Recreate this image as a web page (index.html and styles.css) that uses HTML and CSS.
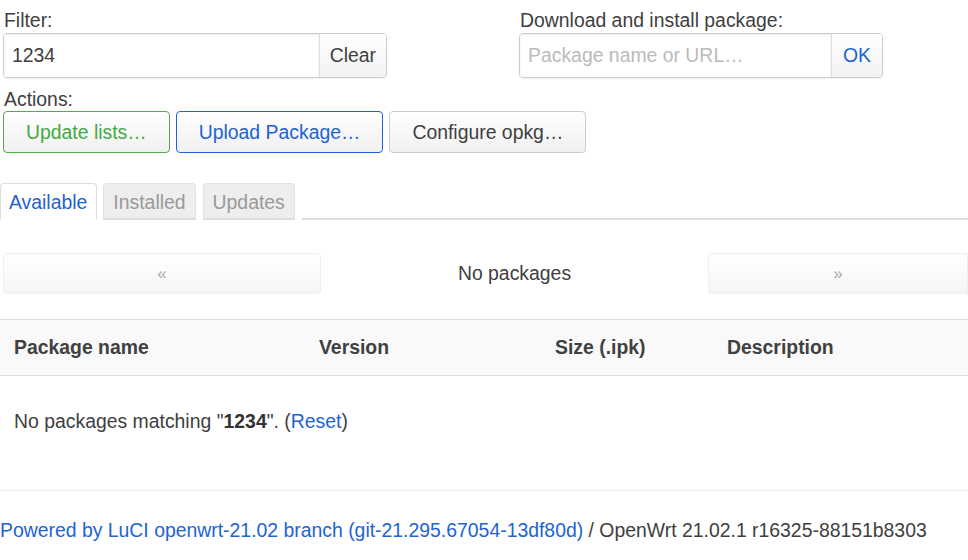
FILE: index.html
```html
<!DOCTYPE html>
<html lang="en">
<head>
    <meta charset="UTF-8">
    <title>Software - LuCI</title>
    <link rel="stylesheet" href="styles.css">
</head>
<body>
    <div class="controls">
        <div class="control-group">
            <label class="control-label">Filter:</label>
            <div class="input-group filter-group">
                <input class="text-input" type="text" value="1234">
                <button class="addon-button">Clear</button>
            </div>
        </div>
        <div class="control-group">
            <label class="control-label">Download and install package:</label>
            <div class="input-group install-group">
                <input class="text-input" type="text" placeholder="Package name or URL…">
                <button class="addon-button addon-blue">OK</button>
            </div>
        </div>
        <div class="control-group actions">
            <label class="control-label">Actions:</label>
            <div class="button-row">
                <button class="btn btn-positive">Update lists…</button>
                <button class="btn btn-action">Upload Package…</button>
                <button class="btn btn-neutral">Configure opkg…</button>
            </div>
        </div>
    </div>

    <ul class="tabs">
        <li class="tab active">Available</li>
        <li class="tab">Installed</li>
        <li class="tab">Updates</li>
        <li class="tab-fill"></li>
    </ul>

    <div class="pager">
        <button class="page-btn">&laquo;</button>
        <div class="page-info">No packages</div>
        <button class="page-btn page-next">&raquo;</button>
    </div>

    <table class="package-table">
        <thead>
            <tr>
                <th class="col-name">Package name</th>
                <th class="col-version">Version</th>
                <th class="col-size">Size (.ipk)</th>
                <th>Description</th>
            </tr>
        </thead>
        <tbody>
            <tr>
                <td colspan="4" class="empty-row">No packages matching "<strong>1234</strong>". (<a href="#">Reset</a>)</td>
            </tr>
        </tbody>
    </table>

    <footer class="footer">
        <a href="#">Powered by LuCI openwrt-21.02 branch (git-21.295.67054-13df80d)</a> / OpenWrt 21.02.1 r16325-88151b8303
    </footer>
</body>
</html>
```

FILE: styles.css
```css
body {
    margin: 0;
    font-family: "Liberation Sans", Arial, sans-serif;
    font-size: 19.4px;
    color: #404040;
    background: #fff;
    overflow: hidden;
}

a {
    color: #1d63d4;
    text-decoration: none;
}

.controls {
    display: grid;
    grid-template-columns: 516px 1fr;
    padding: 8px 3px 0 3px;
}

.control-label {
    display: block;
    padding-left: 1px;
    line-height: 24px;
    margin-bottom: 1px;
}

.actions {
    grid-column: 1 / 3;
    margin-top: 9px;
}

.actions .control-label {
    margin-bottom: 0;
}

.input-group {
    display: flex;
    height: 43px;
    border: 1px solid #ccc;
    border-radius: 4px;
    box-shadow: 0 1px 2px rgba(0, 0, 0, 0.06);
    overflow: hidden;
}

.filter-group {
    width: 382px;
}

.install-group {
    width: 362px;
}

.text-input {
    flex: 1;
    min-width: 0;
    border: none;
    outline: none;
    padding: 0 8px;
    font: inherit;
    color: #404040;
    box-shadow: inset 0 1px 2px rgba(0, 0, 0, 0.08);
}

.text-input::placeholder {
    color: #bbb;
}

.addon-button {
    border: none;
    border-left: 1px solid #ddd;
    background: linear-gradient(#fff, #f2f2f2);
    font: inherit;
    color: #404040;
    padding: 0 10px;
}

.addon-blue {
    color: #1d63d4;
    padding: 0 11px;
}

.button-row {
    display: flex;
    gap: 6px;
}

.btn {
    height: 42px;
    border-radius: 4px;
    background: linear-gradient(#fff, #f0f0f0);
    font: inherit;
    padding: 0 22px;
    border: 1px solid #ccc;
}

.btn-positive {
    border-color: #4cae4c;
    color: #45a845;
}

.btn-action {
    border-color: #1d63d4;
    color: #1d63d4;
}

.btn-neutral {
    color: #404040;
}

.tabs {
    display: flex;
    list-style: none;
    margin: 30px 0 0 0;
    padding: 0;
    height: 37px;
}

.tab {
    margin-right: 7px;
    padding: 0 9px;
    line-height: 36px;
    background: #eee;
    color: #999;
    border: 1px solid #e2e2e2;
    border-bottom: 2px solid #ddd;
    border-radius: 4px 4px 0 0;
}

.tab.active {
    margin-right: 0;
    background: #fff;
    color: #1d63d4;
    padding: 0 9px 0 8px;
    border-color: #ddd;
    border-bottom-color: #fff;
}

.tab.active + .tab {
    margin-left: 6px;
}

.tab-fill {
    flex: 1;
    border-bottom: 2px solid #ddd;
}

.pager {
    display: flex;
    align-items: center;
    margin: 33px 0 0 3px;
}

.page-btn {
    width: 318px;
    height: 41px;
    border: 1px solid #eee;
    border-radius: 4px;
    background: linear-gradient(#fff, #f5f5f5);
    color: #aaa;
    font: inherit;
    font-size: 17px;
}

.page-next {
    width: 260px;
    border-radius: 4px 0 0 4px;
}

.page-info {
    flex: 1;
    text-align: center;
}

.package-table {
    width: 100%;
    border-collapse: collapse;
    margin-top: 25px;
}

.package-table th {
    text-align: left;
    background: #f9f9f9;
    border-top: 1px solid #ddd;
    border-bottom: 1px solid #ddd;
    height: 55px;
    padding: 0 14px;
    font-weight: bold;
}

.col-name {
    width: 277px;
}

.col-version {
    width: 208px;
}

.col-size {
    width: 144px;
}

.empty-row {
    padding: 33px 14px 0 14px;
    height: 24px;
}

.empty-row strong {
    color: #333;
}

.footer {
    margin-top: 57px;
    border-top: 1px solid #eee;
    padding-top: 28px;
    white-space: nowrap;
}
```
